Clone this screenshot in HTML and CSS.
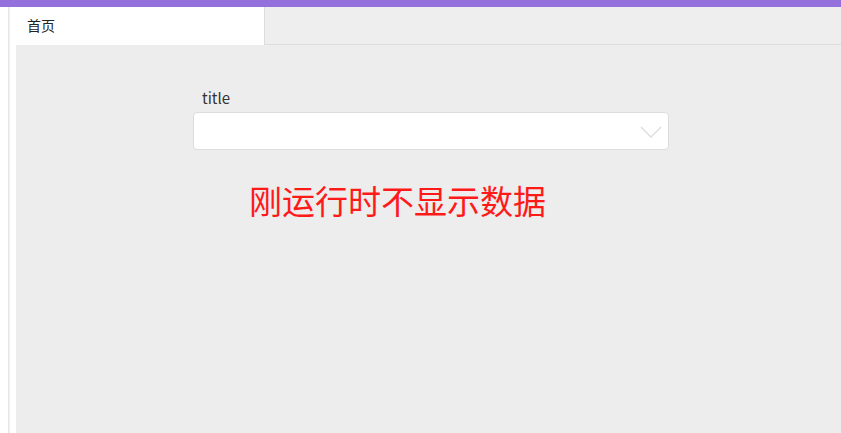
FILE: index.html
```html
<!DOCTYPE html>
<html lang="zh-CN">
<head>
<meta charset="utf-8">
<title>首页</title>
<link rel="stylesheet" href="styles.css">
</head>
<body>
<div class="topbar"></div>
<div class="layout">
  <div class="side"></div>
  <div class="divider"></div>
  <div class="main">
    <div class="tabs">
      <div class="tab">首页</div>
      <div class="tab-fill"></div>
    </div>
    <div class="content">
      <div class="form">
        <div class="label">title</div>
        <div class="select">
          <svg class="chev" width="22" height="12" viewBox="0 0 22 12"><path d="M1 1 L11 11 L21 1" fill="none" stroke="#dcdcdc" stroke-width="1.3"/></svg>
        </div>
        <div class="notice">刚运行时不显示数据</div>
      </div>
    </div>
  </div>
</div>
</body>
</html>
```
FILE: styles.css
```css
* { box-sizing: border-box; }
html, body { margin: 0; padding: 0; height: 100%; }
body {
  font-family: "Noto Sans CJK SC", "Noto Sans", sans-serif;
  color: #333;
  background: #fff;
  display: flex;
  flex-direction: column;
  overflow: hidden;
}
.topbar { height: 7px; background: #9370db; flex: none; }
.layout { flex: 1; display: flex; min-height: 0; }
.side { width: 8px; background: #fff; }
.divider { width: 2px; background: linear-gradient(to right, #e4e4e4, #f2f2f2); }
.main { flex: 1; display: flex; flex-direction: column; background: #fff; }
.tabs { display: flex; height: 38px; flex: none; }
.tab {
  width: 255px;
  background: #fff;
  border-right: 1px solid #dcdcdc;
  padding-left: 17px;
  font-size: 14px;
  line-height: 36px;
  color: #222;
}
.tab-fill { flex: 1; background: #eee; border-bottom: 1px solid #dcdcdc; }
.content { flex: 1; margin-left: 6px; background: #ededed; }
.form { padding: 43px 0 0 177px; width: 653px; }
.label { font-size: 15px; line-height: 20px; padding-left: 9px; margin-bottom: 4px; color: #333; }
.select {
  height: 38px;
  width: 476px;
  background: #fff;
  border: 1px solid #dcdcdc;
  border-radius: 4px;
  display: flex;
  align-items: center;
  justify-content: flex-end;
  padding-right: 6px;
}
.chev { display: block; margin-top: 1px; }
.notice {
  margin-top: 28px;
  padding-left: 56px;
  font-size: 33px;
  line-height: 44px;
  color: #ff1a1a;
}
```
